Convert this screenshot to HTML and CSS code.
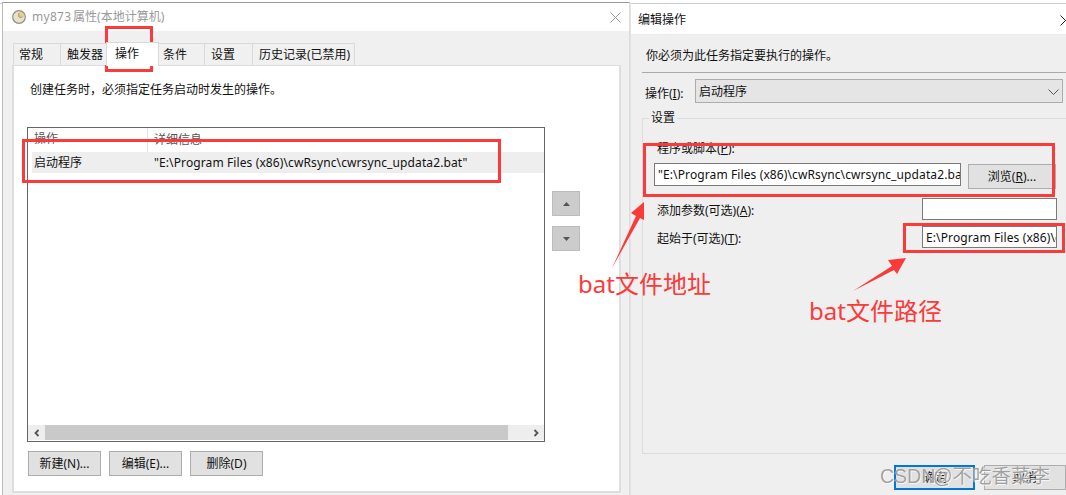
FILE: index.html
```html
<!DOCTYPE html>
<html lang="zh-CN">
<head>
<meta charset="utf-8">
<title>任务属性</title>
<link rel="stylesheet" href="styles.css">
</head>
<body>
<div class="desktop">
  <section class="win win-left">
    <header class="titlebar">
      <div class="title-main">
        <svg class="clock" width="14" height="14" viewBox="0 0 14 14"><circle cx="7" cy="7" r="6.3" fill="#e9e2c8" stroke="#8d8d8d" stroke-width="1.2"/><path d="M7 7V3M7 7h3.4" stroke="#777" stroke-width="1.1" fill="none"/><path d="M7 7V1.6A5.4 5.4 0 0 1 12.4 7z" fill="#e8c66a" opacity=".7"/></svg>
        <span class="title-text inactive"><span class="title-latin">my873</span> 属性(本地计算机)</span>
      </div>
      <svg class="close" width="11" height="11" viewBox="0 0 11 11"><path d="M.5.5l10 10M10.5.5l-10 10" stroke="#999" fill="none"/></svg>
    </header>
    <div class="win-body">
      <nav class="tabs">
        <span class="tab t1">常规</span>
        <span class="tab t2">触发器</span>
        <span class="tab t3 active">操作</span>
        <span class="tab t4">条件</span>
        <span class="tab t5">设置</span>
        <span class="tab t6">历史记录(已禁用)</span>
      </nav>
      <div class="panel">
        <p class="hint">创建任务时，必须指定任务启动时发生的操作。</p>
        <div class="list-row">
          <div class="list">
            <div class="list-head"><span class="col-a">操作</span><span class="col-b">详细信息</span></div>
            <div class="list-item"><span class="col-a">启动程序</span><span class="col-b path">"E:\Program Files (x86)\cwRsync\cwrsync_updata2.bat"</span></div>
            <div class="list-fill"></div>
            <div class="hscroll">
              <span class="sb-btn"><svg width="8" height="8" viewBox="0 0 8 8"><path d="M5.5 1L2.5 4l3 3" stroke="#555" stroke-width="1.8" fill="none"/></svg></span>
              <span class="sb-thumb"></span>
              <span class="sb-track"></span>
              <span class="sb-btn"><svg width="8" height="8" viewBox="0 0 8 8"><path d="M2.5 1l3 3-3 3" stroke="#555" stroke-width="1.8" fill="none"/></svg></span>
            </div>
          </div>
          <div class="side-btns">
            <span class="side-btn"><svg width="7" height="4" viewBox="0 0 7 4"><path d="M3.5 0L7 4H0z" fill="#555"/></svg></span>
            <span class="side-btn"><svg width="7" height="4" viewBox="0 0 7 4"><path d="M0 0h7L3.5 4z" fill="#555"/></svg></span>
          </div>
        </div>
        <div class="list-actions">
          <span class="btn act">新建(N)...</span>
          <span class="btn act">编辑(E)...</span>
          <span class="btn act">删除(D)</span>
        </div>
      </div>
    </div>
  </section>

  <section class="win win-right">
    <header class="titlebar tall">
      <span class="title-text dlg">编辑操作</span>
      <svg class="close-dark" width="11" height="11" viewBox="0 0 11 11"><path d="M.5.5l10 10M10.5.5l-10 10" stroke="#222" fill="none"/></svg>
    </header>
    <div class="dlg-body">
      <p class="intro">你必须为此任务指定要执行的操作。</p>
      <div class="rule"></div>
      <div class="op-row">
        <span class="op-label">操作(<u>I</u>):</span>
        <div class="combo"><span>启动程序</span><svg width="11" height="6" viewBox="0 0 11 6"><path d="M.5.5l5 5 5-5" stroke="#555" fill="none"/></svg></div>
      </div>
      <fieldset class="settings">
        <legend>设置</legend>
        <div class="field-label first">程序或脚本(<u>P</u>):</div>
        <div class="prog-row">
          <div class="input prog path">"E:\Program Files (x86)\cwRsync\cwrsync_updata2.bat"</div>
          <span class="btn browse">浏览(<u>R</u>)...</span>
        </div>
        <div class="arg-row args">
          <span class="field-label">添加参数(可选)(<u>A</u>):</span>
          <div class="input small"></div>
        </div>
        <div class="arg-row start">
          <span class="field-label">起始于(可选)(<u>T</u>):</span>
          <div class="input small path">E:\Program Files (x86)\cwRsync</div>
        </div>
      </fieldset>
      <div class="dlg-actions">
        <span class="btn ok">确定</span>
        <span class="btn cancel">取消</span>
      </div>
    </div>
  </section>

  <div class="mark mark-tab"></div>
  <div class="mark mark-row"></div>
  <div class="mark mark-prog"></div>
  <div class="mark mark-start"></div>
  <svg class="arrows" width="1066" height="495" viewBox="0 0 1066 495">
    <path d="M612 268L636 216 631 213 644 202 644 220 640 218z" fill="#fb3a3a"/>
    <path d="M853 291L892 266 888 260 906 258 897 274 894 270z" fill="#fb3a3a"/>
  </svg>
  <div class="note note-a">bat文件地址</div>
  <div class="note note-b">bat文件路径</div>
  <div class="watermark">CSDN @不吃香菜李</div>
</div>
</body>
</html>
```

FILE: styles.css
```css
* { box-sizing: border-box; }
html, body { margin: 0; padding: 0; background: #fff; }
body { font-family: "Noto Sans", "Noto Sans CJK SC", sans-serif; font-size: 12px; line-height: 18px; color: #111; }
p { margin: 0; }
.desktop { position: relative; width: 1066px; height: 495px; overflow: hidden; background: #fff; }
.desktop::before { content: ""; display: block; height: 3px; border-bottom: 1px solid #c9ccd6; }
.path { letter-spacing: .11px; }

.win { position: absolute; display: flex; flex-direction: column; background: #f0f0f0; }
.win-left { left: 2px; top: 2px; width: 628px; height: 493px; border-left: 1px solid #bbb; border-top: 1px solid #999; border-right: 1px solid #dcdcdc; }
.win-right { left: 630px; top: 5px; width: 450px; height: 490px; background: #efefef; border-left: 1px solid #e2e2e2; }

.titlebar { display: flex; align-items: center; justify-content: space-between; height: 28px; background: #fff; flex: none; padding: 0 8px 0 9px; }
.titlebar.tall { height: 30px; padding: 1px 9px 0 7px; border-bottom: 1px solid #ececec; }
.title-main { display: flex; align-items: center; gap: 6px; }
.title-text.inactive { color: #999; }
.title-latin { letter-spacing: .3px; margin-right: -1.5px; }
.title-text.dlg { color: #111; }

.win-body { flex: 1; padding-top: 12px; }
.tabs { display: flex; align-items: flex-end; height: 22px; margin-left: 10px; position: relative; z-index: 1; }
.tab { height: 22px; display: flex; align-items: center; padding: 1px 0 0 6px; background: #f0f0f0; border: 1px solid #d9d9d9; border-bottom: none; margin-right: -1px; }
.t1 { width: 48px; padding-left: 5px; } .t2 { width: 47px; } .t3 { width: 53px; padding-left: 8px; } .t4 { width: 47px; padding-left: 4px; } .t5 { width: 49px; } .t6 { width: 103px; }
.tab.active { height: 24px; background: #fff; margin-bottom: -1px; padding-top: 0; padding-bottom: 2px; }

.panel { width: 609px; height: 428px; margin-left: 9px; background: #fff; border: 2px solid #dedede; border-top-width: 1px; padding: 15px 0 0 13px; }
.hint { height: 18px; margin-left: 3px; }
.list-row { display: flex; gap: 7px; margin-top: 28px; }
.list { width: 518px; height: 315px; border: 1px solid #666; background: #fff; display: flex; flex-direction: column; }
.list-head { display: flex; height: 24px; flex: none; align-items: center; color: #555; }
.list-head .col-a { width: 120px; height: 24px; line-height: 22px; border-right: 1px solid #e3e3e3; padding-left: 6px; }
.list-head .col-b { padding-left: 6px; }
.list-item { display: flex; align-items: center; height: 21px; margin-left: 4px; background: #eee; flex: none; }
.list-item .col-a { width: 116px; padding-left: 2px; }
.list-item .col-b { padding-left: 6px; white-space: nowrap; }
.list-fill { flex: 1; }
.hscroll { display: flex; height: 15px; flex: none; margin-bottom: 1px; background: #eee; }
.sb-btn { width: 17px; display: flex; align-items: center; justify-content: center; }
.sb-thumb { width: 463px; background: #c9c9c9; }
.sb-track { flex: 1; }
.side-btns { display: flex; flex-direction: column; gap: 10px; margin-top: 64px; }
.side-btn { width: 28px; height: 25px; background: #ccc; border: 1px solid #bcbcbc; display: flex; align-items: center; justify-content: center; }

.btn { display: flex; align-items: center; justify-content: center; background: #e1e1e1; border: 1px solid #adadad; white-space: nowrap; }
.list-actions { display: flex; gap: 8px; margin: 9px 0 0 1px; }
.act { width: 73px; height: 25px; }

.dlg-body { flex: 1; padding-left: 11px; display: flex; flex-direction: column; align-items: flex-start; }
.intro { margin: 12px 0 0 4px; height: 18px; }
.rule { width: 100%; height: 1px; margin-top: 7px; background: #a9a9a9; }
.op-row { display: flex; align-items: center; margin-top: 6px; }
.op-label { width: 50px; margin: 5px 0 0 3px; }
.combo { width: 368px; height: 24px; background: #e5e5e5; border: 1px solid #adadad; display: flex; align-items: center; justify-content: space-between; padding: 1px 3px 0; }
.settings { width: 445px; height: 345px; margin: 6px 0 0; padding: 0 0 0 11px; border: 1px solid #dcdcdc; }
.settings legend { padding: 0 2px; margin-left: -5px; line-height: 18px; }
.field-label { margin-left: 3px; }
.field-label.first { margin-top: 13px; }
.prog-row { display: flex; align-items: flex-start; gap: 7px; margin-top: 5px; }
.input { height: 23px; background: #fff; border: 1px solid #7a7a7a; padding: 1px 3px 0; line-height: 20px; white-space: nowrap; overflow: hidden; }
.input.prog { width: 307px; }
.browse { width: 88px; height: 25px; margin-top: 1px; }
.arg-row { display: flex; align-items: center; justify-content: space-between; width: 403px; }
.args { margin-top: 8px; }
.args .field-label { margin-top: 5px; }
.start { margin-top: 6px; }
.start .field-label { margin-top: 4px; }
.input.small { width: 135px; height: 22px; }
.dlg-actions { display: flex; gap: 9px; margin: 11px 14px 0 auto; }
.ok { width: 81px; height: 25px; border: 2px solid #0078d7; }
.cancel { width: 82px; height: 25px; }

.mark { position: absolute; border: 3px solid #fb3a3a; }
.mark-tab { left: 105px; top: 26px; width: 48px; height: 46px; }
.mark-row { left: 22px; top: 139px; width: 479px; height: 44px; }
.mark-prog { left: 643px; top: 143px; width: 412px; height: 54px; }
.mark-start { left: 903px; top: 223px; width: 162px; height: 30px; }
.arrows { position: absolute; left: 0; top: 0; }
.note { position: absolute; font-size: 24px; line-height: 30px; color: #fb3a3a; white-space: nowrap; }
.note-a { left: 578px; top: 269px; }
.note-b { left: 809px; top: 296px; }
.watermark { position: absolute; left: 880px; top: 463px; font-family: "Liberation Sans", "Noto Sans CJK SC", sans-serif; font-size: 19.5px; word-spacing: -8px; line-height: 26px; color: rgba(120,120,120,.7); text-shadow: 0 0 1px #fff, 1px 1px 0 rgba(255,255,255,.7); white-space: nowrap; }
```
